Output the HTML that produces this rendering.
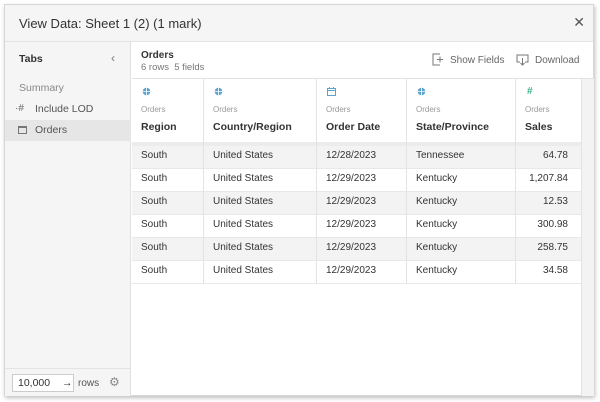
<!DOCTYPE html>
<html><head><style>
*{box-sizing:border-box;margin:0;padding:0}
body{width:600px;height:402px;background:#fff;font-family:"Liberation Sans",sans-serif;position:relative;overflow:hidden}
.dlg{position:absolute;left:4px;top:4px;width:590px;height:392px;background:#fff;border:1px solid #d6d6d6;box-shadow:1px 2px 4px rgba(0,0,0,.25)}
.title{position:absolute;left:0;top:0;width:100%;height:37px;background:#f5f5f5;border-bottom:1px solid #e3e3e3;font-size:13px;color:#333;padding:11px 0 0 14px}
.x{position:absolute;right:8px;top:9px;font-size:14px;color:#555}
.left{position:absolute;left:0;top:37px;width:126px;height:354px;background:#f5f5f5;border-right:1px solid #e0e0e0}
.lt{position:absolute;font-size:10.5px;color:#333}
.sel{position:absolute;left:0;top:78px;width:126px;height:21px;background:#e6e6e6}
.foot{position:absolute;left:0;bottom:0;width:126px;height:28px;border-top:1px solid #e3e3e3}
.inp{position:absolute;left:7px;top:5px;width:62px;height:18px;background:#fff;border:1px solid #ccc;font-size:10.5px;padding:2px 0 0 5px;color:#333}
.cell{position:absolute;font-size:10px;color:#333;white-space:nowrap}
.hdr{position:absolute;font-size:11px;color:#333;font-weight:bold}
.sub{position:absolute;font-size:8px;color:#999}
.vl{position:absolute;width:1px;background:#e3e3e3}
.row{position:absolute;left:127px;width:449px;height:23px;border-bottom:1px solid #e8e8e8}
</style></head><body>
<div class="dlg">
<div class="title">View Data: Sheet 1 (2) (1 mark)<span class="x">✕</span></div>
<div class="left">
<div class="lt" style="left:14px;top:11px;font-weight:bold">Tabs</div>
<div class="lt" style="left:106px;top:9px;color:#777;font-size:12px">‹</div>
<div class="lt" style="left:14px;top:40px;color:#888">Summary</div>
<div class="lt" style="left:10px;top:61px;color:#666;font-size:10px">·#</div>
<div class="lt" style="left:30px;top:61px;color:#555">Include LOD</div>
<div class="sel"></div>
<div style="position:absolute;left:13px;top:84px;width:9px;height:8px;border:1px solid #777;border-top-width:2px"></div>
<div class="lt" style="left:30px;top:82px;color:#555">Orders</div>
<div class="foot"><div class="inp">10,000 <span style="margin-left:9px">→</span></div>
<div class="lt" style="left:73px;top:9px;color:#555;font-size:10px">rows</div>
<div class="lt" style="left:104px;top:6px;color:#888;font-size:12px">⚙</div></div>
</div>
<div class="hdr" style="left:136px;top:45px;font-size:10px">Orders</div>
<div class="sub" style="left:136px;top:57px;font-size:9.5px;color:#777">6 rows&nbsp; 5 fields</div>
<svg style="position:absolute;left:427px;top:48px" width="12" height="13" viewBox="0 0 12 13"><path d="M8 1H1v11h7M5 6.5h6M8 3.5v6" fill="none" stroke="#777"/></svg>
<div class="cell" style="left:445px;top:50px;color:#666">Show Fields</div>
<svg style="position:absolute;left:511px;top:49px" width="13" height="12" viewBox="0 0 13 12"><path d="M4 8H1V1h11v7H9M6.5 4v7M4.5 9l2 2 2-2" fill="none" stroke="#777"/></svg>
<div class="cell" style="left:530px;top:50px;color:#666">Download</div>
<div style="position:absolute;left:127px;top:73px;width:462px;height:1px;background:#e3e3e3"></div>
<div style="position:absolute;left:127px;top:137px;width:449px;height:4px;background:#ececec"></div>
<div style="position:absolute;left:576px;top:74px;width:13px;height:317px;background:#f3f3f3;border-left:1px solid #e3e3e3"></div>
<div class="row" style="top:141px;background:#f3f3f3"></div>
<div class="row" style="top:164px"></div>
<div class="row" style="top:187px;background:#f3f3f3"></div>
<div class="row" style="top:210px"></div>
<div class="row" style="top:233px;background:#f3f3f3"></div>
<div class="row" style="top:256px"></div>
<div class="vl" style="left:198px;top:74px;height:205px"></div>
<div class="vl" style="left:311px;top:74px;height:205px"></div>
<div class="vl" style="left:401px;top:74px;height:205px"></div>
<div class="vl" style="left:510px;top:74px;height:205px"></div>

<svg style="position:absolute;left:137px;top:82px" width="9" height="9" viewBox="0 0 9 9"><circle cx="4.5" cy="4.5" r="3.8" fill="#5aa3cf"/><path d="M.7 4.5h7.6M4.5.7v7.6" stroke="#fff" stroke-width=".8"/></svg>
<svg style="position:absolute;left:209px;top:82px" width="9" height="9" viewBox="0 0 9 9"><circle cx="4.5" cy="4.5" r="3.8" fill="#5aa3cf"/><path d="M.7 4.5h7.6M4.5.7v7.6" stroke="#fff" stroke-width=".8"/></svg>
<svg style="position:absolute;left:322px;top:82px" width="9" height="9" viewBox="0 0 9 9"><path d="M.5 1.5h8v7h-8zM.5 3.5h8M2.5 0v2M6.5 0v2" fill="none" stroke="#5aa3cf"/></svg>
<svg style="position:absolute;left:412px;top:82px" width="9" height="9" viewBox="0 0 9 9"><circle cx="4.5" cy="4.5" r="3.8" fill="#5aa3cf"/><path d="M.7 4.5h7.6M4.5.7v7.6" stroke="#fff" stroke-width=".8"/></svg>
<div class="sub" style="left:522px;top:81px;color:#3bb38a;font-size:10px;font-weight:bold">#</div>
<div class="sub" style="left:136px;top:100px">Orders</div>
<div class="sub" style="left:208px;top:100px">Orders</div>
<div class="sub" style="left:321px;top:100px">Orders</div>
<div class="sub" style="left:411px;top:100px">Orders</div>
<div class="sub" style="left:520px;top:100px">Orders</div>
<div class="hdr" style="left:136px;top:116px;font-size:10.5px">Region</div>
<div class="hdr" style="left:208px;top:116px;font-size:10.5px">Country/Region</div>
<div class="hdr" style="left:321px;top:116px;font-size:10.5px">Order Date</div>
<div class="hdr" style="left:411px;top:116px;font-size:10.5px">State/Province</div>
<div class="hdr" style="left:520px;top:116px;font-size:10.5px">Sales</div>

<div class="cell" style="left:136px;top:145px">South</div><div class="cell" style="left:208px;top:145px">United States</div><div class="cell" style="left:321px;top:145px">12/28/2023</div><div class="cell" style="left:411px;top:145px">Tennessee</div><div class="cell" style="right:25px;top:145px">64.78</div>
<div class="cell" style="left:136px;top:168px">South</div><div class="cell" style="left:208px;top:168px">United States</div><div class="cell" style="left:321px;top:168px">12/29/2023</div><div class="cell" style="left:411px;top:168px">Kentucky</div><div class="cell" style="right:25px;top:168px">1,207.84</div>
<div class="cell" style="left:136px;top:191px">South</div><div class="cell" style="left:208px;top:191px">United States</div><div class="cell" style="left:321px;top:191px">12/29/2023</div><div class="cell" style="left:411px;top:191px">Kentucky</div><div class="cell" style="right:25px;top:191px">12.53</div>
<div class="cell" style="left:136px;top:214px">South</div><div class="cell" style="left:208px;top:214px">United States</div><div class="cell" style="left:321px;top:214px">12/29/2023</div><div class="cell" style="left:411px;top:214px">Kentucky</div><div class="cell" style="right:25px;top:214px">300.98</div>
<div class="cell" style="left:136px;top:237px">South</div><div class="cell" style="left:208px;top:237px">United States</div><div class="cell" style="left:321px;top:237px">12/29/2023</div><div class="cell" style="left:411px;top:237px">Kentucky</div><div class="cell" style="right:25px;top:237px">258.75</div>
<div class="cell" style="left:136px;top:260px">South</div><div class="cell" style="left:208px;top:260px">United States</div><div class="cell" style="left:321px;top:260px">12/29/2023</div><div class="cell" style="left:411px;top:260px">Kentucky</div><div class="cell" style="right:25px;top:260px">34.58</div>
</div>
</body></html>
